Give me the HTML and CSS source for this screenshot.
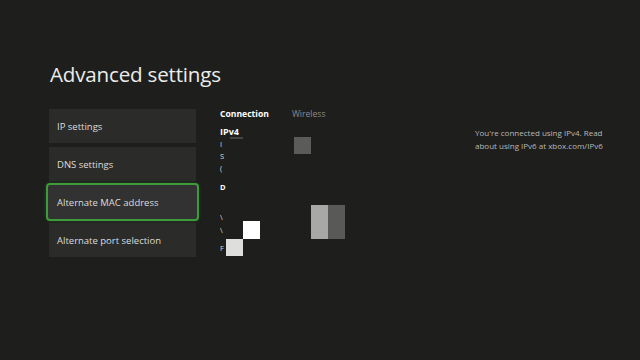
FILE: index.html
```html
<!DOCTYPE html>
<html lang="en">
<head>
  <meta charset="UTF-8">
  <title>Advanced settings</title>
  <link rel="stylesheet" href="styles.css">
</head>
<body>
  <div class="page">
    <h1 class="title">Advanced settings</h1>

    <div class="content">
      <ul class="menu">
        <li class="menu-item">IP settings</li>
        <li class="menu-item">DNS settings</li>
        <li class="menu-item focused">Alternate MAC address</li>
        <li class="menu-item">Alternate port selection</li>
      </ul>

      <div class="details">
        <div class="tabs">
          <span class="tab active">Connection</span>
          <span class="tab">Wireless</span>
        </div>
        <div class="section-head">IPv4</div>
        <div class="underline"></div>
        <ul class="values">
          <li class="v-ip">I</li>
          <li class="v-sub">S</li>
          <li class="v-gw">(</li>
          <li class="v-dns bold">D</li>
          <li class="v-mac1">\</li>
          <li class="v-mac2">\</li>
          <li class="v-port">F</li>
        </ul>

        <!-- blurred blocks laid over the values -->
        <div class="blk blk-a"></div>
        <div class="blk blk-b"></div>
        <div class="blk blk-c"></div>
        <div class="blk blk-d"></div>
        <div class="blk blk-e"></div>
      </div>

      <p class="info">You're connected using IPv4. Read about using IPv6 at xbox.com/IPv6</p>
    </div>
  </div>
</body>
</html>
```

FILE: styles.css
```css
* {
  box-sizing: border-box;
  margin: 0;
  padding: 0;
}

body {
  width: 640px;
  height: 360px;
  overflow: hidden;
  background-color: #1e1e1c;
  font-family: "Open Sans", "Noto Sans", sans-serif;
  color: #e6e6e6;
}

.page {
  padding: 59px 0 0 49px;
}

.title {
  font-size: 20.6px;
  font-weight: 400;
  line-height: 30px;
  color: #ececec;
  padding-left: 1px;
  letter-spacing: -0.2px;
}

.content {
  display: flex;
  margin-top: 20px;
}

.menu {
  list-style: none;
  display: flex;
  flex-direction: column;
  gap: 4px;
  width: 147px;
}

.menu-item {
  height: 34px;
  display: flex;
  align-items: center;
  padding-left: 8px;
  background-color: #2b2b2a;
  font-size: 9.5px;
  color: #dcdcdc;
}

.menu-item.focused {
  background-color: #323232;
  outline: 2px solid #3f9a3c;
  box-shadow: 0 0 4px 1px rgba(60, 160, 60, 0.5);
  border-radius: 2px;
  margin-left: -1px;
  padding-left: 9px;
  width: 149px;
}

.details {
  position: relative;
  width: 255px;
  margin-left: 24px;
}

.tabs {
  display: flex;
  gap: 23px;
  font-size: 8.6px;
  line-height: 12px;
  margin-top: -1px;
}

.tab {
  color: #8a8a8a;
}

.tab.active {
  color: #ffffff;
  font-weight: 700;
}

.section-head {
  margin-top: 6px;
  font-size: 9px;
  line-height: 12px;
  font-weight: 700;
  color: #ffffff;
}

.underline {
  width: 13px;
  height: 2px;
  margin: -1px 0 0 10px;
  background-color: #454545;
}

.values {
  list-style: none;
  white-space: nowrap;
  font-size: 7.5px;
  line-height: 10px;
  color: #d8d8d8;
}

.values li {
  margin-top: 2px;
}

.values .v-ip { margin-top: 0; }
.values .v-dns { margin-top: 9px; }
.values .v-mac1 { margin-top: 20px; }
.values .v-mac2 { margin-top: 3px; }
.values .v-port { margin-top: 8px; }

.bold {
  font-weight: 700;
  color: #ffffff;
}

.blk {
  position: absolute;
}

.blk-a {
  left: 74px;
  top: 28px;
  width: 17px;
  height: 17px;
  background-color: #5b5b59;
}

.blk-b {
  left: 91px;
  top: 96px;
  width: 17px;
  height: 34px;
  background-color: #a8a8a7;
}

.blk-c {
  left: 108px;
  top: 96px;
  width: 17px;
  height: 34px;
  background-color: #595958;
}

.blk-d {
  left: 23px;
  top: 112px;
  width: 17px;
  height: 18px;
  background-color: #ffffff;
}

.blk-e {
  left: 6px;
  top: 130px;
  width: 17px;
  height: 17px;
  background-color: #dededd;
}

.info {
  margin: 17px 0 0 0;
  width: 140px;
  font-size: 8px;
  line-height: 13px;
  color: #b8b8b8;
}
```
